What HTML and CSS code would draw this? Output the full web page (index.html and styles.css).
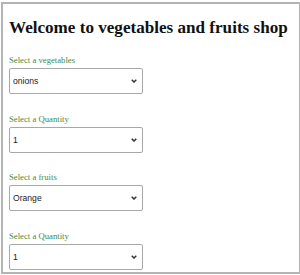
FILE: index.html
```html
<!DOCTYPE html>
<html>
<head>
<meta charset="utf-8">
<link rel="stylesheet" href="styles.css">
</head>
<body>
<div class="frame">
  <h1 class="title">Welcome to vegetables and fruits shop</h1>
  <div class="field">
    <label class="label">Select a vegetables</label>
    <div class="sel-wrap">
      <select class="sel"><option>onions</option></select>
      <svg class="chev" width="6" height="4" viewBox="0 0 6 4"><polyline points="0.7,0.7 3,3 5.3,0.7" fill="none" stroke="#333" stroke-width="1.5"/></svg>
    </div>
  </div>
  <div class="field">
    <label class="label">Select a Quantity</label>
    <div class="sel-wrap">
      <select class="sel"><option>1</option></select>
      <svg class="chev" width="6" height="4" viewBox="0 0 6 4"><polyline points="0.7,0.7 3,3 5.3,0.7" fill="none" stroke="#333" stroke-width="1.5"/></svg>
    </div>
  </div>
  <div class="field">
    <label class="label">Select a fruits</label>
    <div class="sel-wrap">
      <select class="sel"><option>Orange</option></select>
      <svg class="chev" width="6" height="4" viewBox="0 0 6 4"><polyline points="0.7,0.7 3,3 5.3,0.7" fill="none" stroke="#333" stroke-width="1.5"/></svg>
    </div>
  </div>
  <div class="field">
    <label class="label">Select a Quantity</label>
    <div class="sel-wrap">
      <select class="sel"><option>1</option></select>
      <svg class="chev" width="6" height="4" viewBox="0 0 6 4"><polyline points="0.7,0.7 3,3 5.3,0.7" fill="none" stroke="#333" stroke-width="1.5"/></svg>
    </div>
  </div>
</div>
</body>
</html>
```
FILE: styles.css
```css
html, body {
  margin: 0;
  padding: 0;
  background: #fff;
}
body {
  padding: 2px 1px 0 1px;
  font-family: "Liberation Serif", "Times New Roman", serif;
}
.frame {
  width: 290px;
  height: 268px;
  border: 2px solid #b4b4b4;
  padding: 0 0 0 6px;
  display: flex;
  flex-direction: column;
}
.title {
  margin: 14px 0 0 0;
  font-size: 17.1px;
  font-weight: bold;
  color: #111;
  line-height: 20px;
}
.field {
  display: flex;
  flex-direction: column;
  align-items: flex-start;
  margin-top: 17px;
}
.field + .field {
  margin-top: 19.6px;
}
.label {
  color: #3f8c3f;
  font-size: 8.7px;
  line-height: 11px;
  margin-bottom: 2px;
}
.sel-wrap {
  position: relative;
  width: 134px;
  height: 26px;
}
.sel {
  appearance: none;
  -webkit-appearance: none;
  display: block;
  margin: 0;
  width: 134px;
  height: 26px;
  font-family: "Liberation Sans", Arial, sans-serif;
  font-size: 8.6px;
  color: #222;
  border: 1px solid #a8a8a8;
  border-radius: 2px;
  background: #fff;
  padding: 0 3px;
}
.chev {
  position: absolute;
  right: 6px;
  top: 11px;
  pointer-events: none;
}
```
